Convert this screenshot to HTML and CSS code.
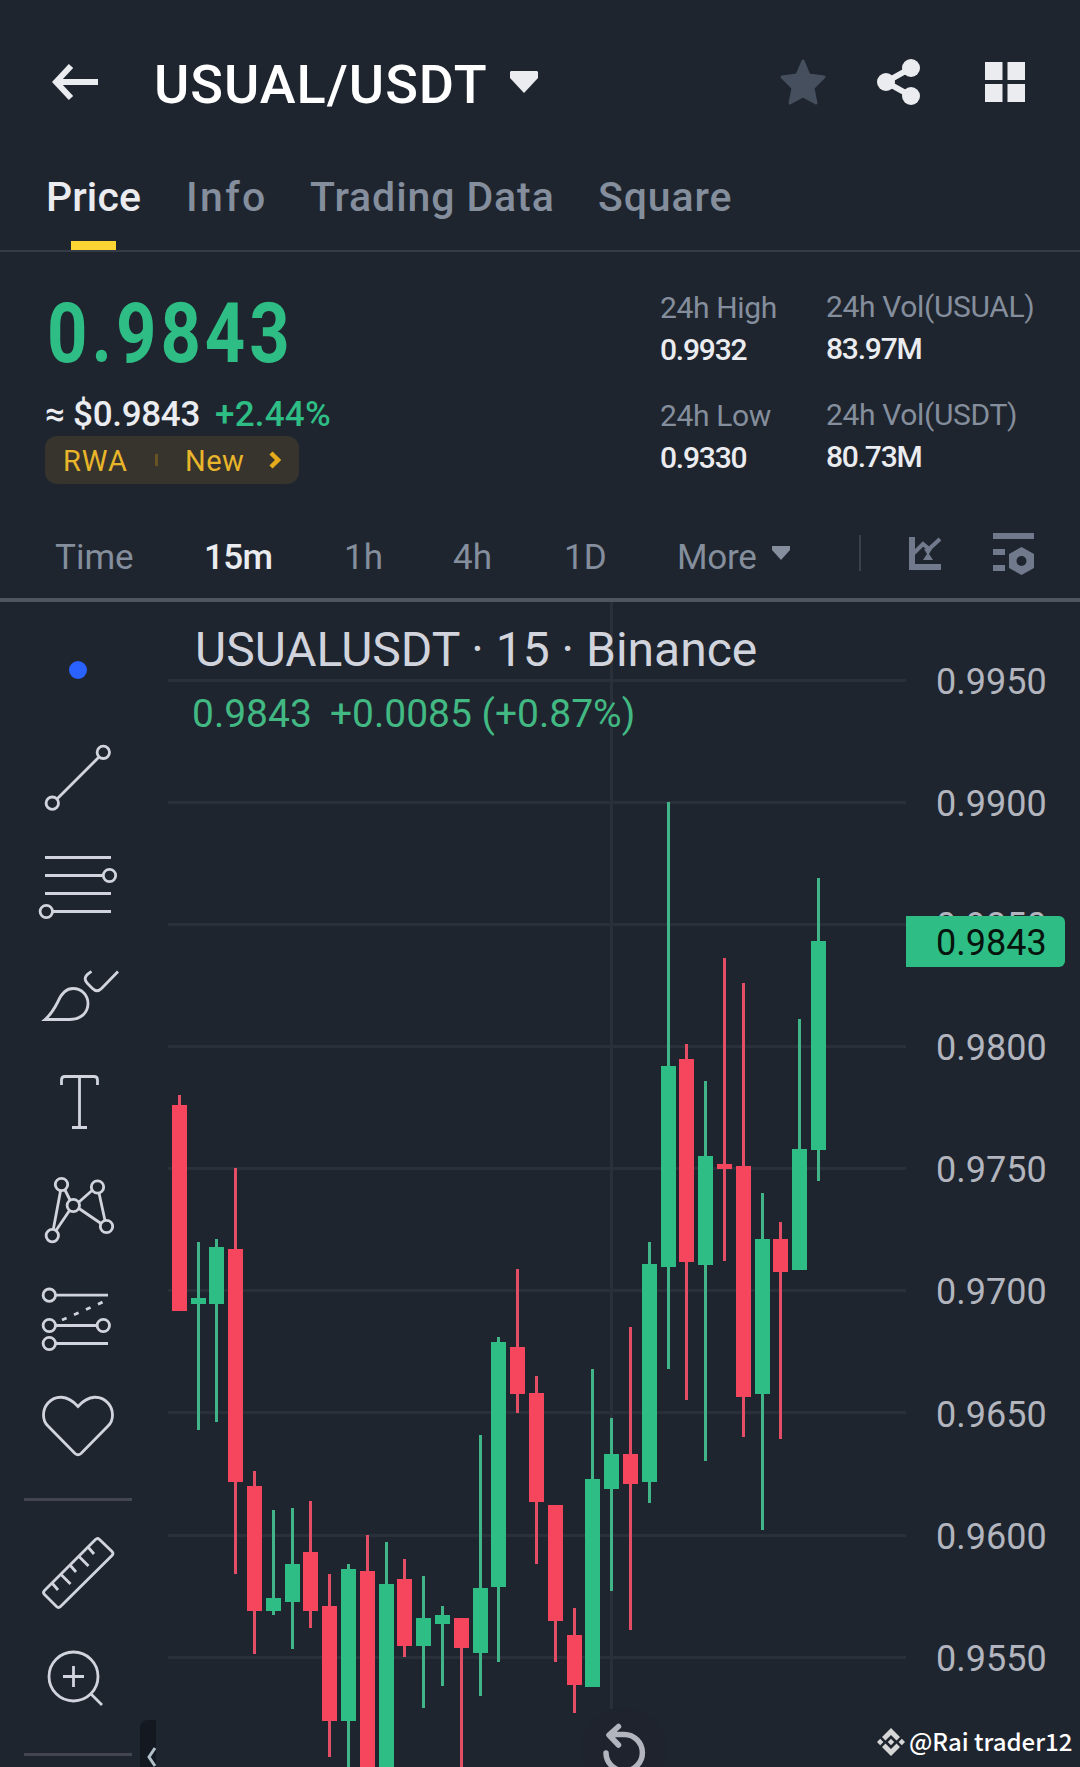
FILE: index.html
```html
<!DOCTYPE html>
<html lang="en">
<head>
    <meta charset="UTF-8">
    <meta name="viewport" content="width=device-width, initial-scale=1.0">
    <title>USUAL/USDT</title>
    <link rel="stylesheet" href="styles.css">
</head>
<body>

    <header class="header">
        <svg class="back" width="46" height="38" viewBox="0 0 46 38">
            <path d="M19 3L4 19l15 16M4 19h42" fill="none" stroke="#eaecef" stroke-width="6"/>
        </svg>
        <h1 class="pair">USUAL/USDT</h1>
        <svg class="pair-caret" width="28" height="22" viewBox="0 0 28 22">
            <path d="M1 0h26l1 1v6L14 22 0 7V1z" fill="#eaecef"/>
        </svg>
        <div class="header-icons">
            <svg width="46" height="46" viewBox="0 0 46 46">
                <path d="M23 2l6 14 15 2-11 11 3 15-13-7-13 7 3-15L2 18l15-2z" fill="#454f5e" stroke="#454f5e" stroke-width="3" stroke-linejoin="round"/>
            </svg>
            <svg width="44" height="46" viewBox="0 0 44 46">
                <path d="M34 9L9 23l25 14" fill="none" stroke="#eaecef" stroke-width="6"/>
                <circle cx="9" cy="23" r="9" fill="#eaecef"/>
                <circle cx="34" cy="9" r="9" fill="#eaecef"/>
                <circle cx="34" cy="37" r="9" fill="#eaecef"/>
            </svg>
            <svg width="40" height="40" viewBox="0 0 40 40">
                <path d="M0 0h17.500v18H0zM22.500 0H40v18H22.500zM0 22h17.500v18H0zM22.500 22H40v18H22.500z" fill="#eaecef"/>
            </svg>
        </div>
    </header>

    <nav class="tabs">
        <div class="tab active">Price</div>
        <div class="tab info">Info</div>
        <div class="tab">Trading Data</div>
        <div class="tab">Square</div>
    </nav>

    <section class="summary">
        <div class="summary-main">
            <div class="last-price">0.9843</div>
            <div class="fiat"><span>≈ $0.9843</span><span class="up">+2.44%</span></div>
            <div class="tags">
                <span class="rwa">RWA</span>
                <i class="tag-sep"></i>
                <span class="new">New</span>
                <svg width="12" height="18" viewBox="0 0 12 18">
                    <path d="M2 2l7 7-7 7" fill="none" stroke="#e5ab1a" stroke-width="4.500"/>
                </svg>
            </div>
        </div>
        <div class="stats high-low">
            <div class="stat"><span class="label">24h High</span><span class="value">0.9932</span></div>
            <div class="stat"><span class="label">24h Low</span><span class="value">0.9330</span></div>
        </div>
        <div class="stats volume">
            <div class="stat"><span class="label">24h Vol(USUAL)</span><span class="value">83.97M</span></div>
            <div class="stat"><span class="label">24h Vol(USDT)</span><span class="value">80.73M</span></div>
        </div>
    </section>

    <div class="intervals">
        <span>Time</span>
        <span class="selected">15m</span>
        <span>1h</span>
        <span>4h</span>
        <span>1D</span>
        <span class="more">More
            <svg width="18" height="14" viewBox="0 0 18 14"><path d="M0 0h18v4L9 14 0 4z" fill="#848e9c"/></svg>
        </span>
        <i class="divider"></i>
        <svg width="33" height="33" viewBox="0 0 33 33">
            <path d="M0 0h6v27h26v6H0z" fill="#717a8c"/>
            <path d="M5 16l9-9 6 5L31 2" fill="none" stroke="#717a8c" stroke-width="4"/>
            <path d="M15 12h8l-3 5 4 6H14l4-6z" fill="#717a8c"/>
        </svg>
        <svg width="42" height="44" viewBox="0 0 42 44">
            <path d="M0 1h41v6H0zM0 17h12v6H0zM0 33h12v6H0z" fill="#717a8c"/>
            <path d="M28.500 15l12.500 7v14l-12.500 7L16 36V22z" fill="#717a8c"/>
            <circle cx="28.500" cy="29" r="5" fill="#1f252f"/>
        </svg>
    </div>

    <main class="chart">
        <aside class="toolbar">
            <svg class="tool" viewBox="0 0 156 108"><circle cx="78" cy="54" r="9" fill="#2962ff" stroke="none"/></svg>
            <!-- trend line -->
            <svg class="tool" viewBox="0 0 156 108">
                <circle cx="52.300" cy="79.200" r="6.200"/><circle cx="103.300" cy="28.300" r="6.200"/>
                <path d="M57 75l42-42"/>
            </svg>
            <!-- fib levels -->
            <svg class="tool" viewBox="0 0 156 108">
                <path d="M45 25.500h66M45 43.500h58M45 61.500h66M53 79.500h58"/>
                <circle cx="109.500" cy="43.500" r="6.200"/><circle cx="46.300" cy="79.500" r="6.200"/>
            </svg>
            <!-- brush -->
            <svg class="tool" viewBox="0 0 156 108">
                <path d="M45 79.500c6-5 10-12 13-18 3-7 8-13 15-13 9 0 15 7 15 15 0 9-7 16-18 16z"/>
                <path d="M91.500 31.500c-7 4-8 8-4 12l5 5c3 3 6 3 9 0l16.500-17"/>
            </svg>
            <!-- text -->
            <svg class="tool" viewBox="0 0 156 108">
                <path d="M61.500 37v-5q0-3.500 3.500-3.500h29q3.500 0 3.500 3.500v5M79.500 28.500v51M72 79.500h15"/>
            </svg>
            <!-- xabcd pattern -->
            <svg class="tool" viewBox="0 0 156 108">
                <circle cx="61.500" cy="28.500" r="6.200"/><circle cx="97.500" cy="31" r="6.200"/>
                <circle cx="73.300" cy="49.500" r="6.200"/><circle cx="52.300" cy="79.600" r="6.200"/><circle cx="106.500" cy="70.500" r="6.200"/>
                <path d="M60.500 35l-7.200 38.500M65 34l5 10M79 46l13-11.500M69.500 54.500L56 74.500M79 52.500l22 15M99 37l6 27.500"/>
            </svg>
            <!-- forecast -->
            <svg class="tool" viewBox="0 0 156 108">
                <circle cx="49.300" cy="31.200" r="6.200"/><circle cx="49.300" cy="61.500" r="6.200"/>
                <circle cx="103.300" cy="61.500" r="6.200"/><circle cx="49.300" cy="79.500" r="6.200"/>
                <path d="M56 31.200h52M56 61.500h41M56 79.500h52"/>
                <path d="M62 56l42-18.500" stroke-dasharray="5 8.100"/>
            </svg>
            <!-- favourites -->
            <svg class="tool" viewBox="0 0 156 108">
                <path d="M78 34.500c-11-12.500-23-11-30-3.500-6 7-6 17 0 23l27 27.500q3 2.500 6 0l27-27.500c6-6 6-16 0-23-7-7.500-19-9-30 3.500z"/>
            </svg>
            <div class="tool-sep"></div>
            <!-- ruler -->
            <svg class="tool" viewBox="0 0 156 108">
                <path d="M95.500 20.500L44.500 71.500q-2 2 0 4l12 12q2 2 4 0l51.500-51q2-2 0-4l-12.500-12q-2-2-4 0z"/>
                <path d="M52 64l6 7M61 55.500l9.500 9.500M70 46l6 7M79 37.500l9.500 9.500M88 28l6 7"/>
            </svg>
            <!-- zoom in -->
            <svg class="tool" viewBox="0 0 156 108">
                <circle cx="73.500" cy="49.500" r="24.500"/>
                <path d="M73.500 39v21M63 49.500h21M91 67l11 11"/>
            </svg>
            <div class="tool-sep"></div>
        </aside>

        <svg class="plot" id="plot" width="750" height="1165" viewBox="156 602 750 1165"></svg>

        <div class="axis">
            <span>0.9950</span>
            <span>0.9900</span>
            <span>0.9850</span>
            <span>0.9800</span>
            <span>0.9750</span>
            <span>0.9700</span>
            <span>0.9650</span>
            <span>0.9600</span>
            <span>0.9550</span>
            <span>0.9500</span>
            <div class="price-tag">0.9843</div>
        </div>

        <div class="legend">
            <div class="legend-title">USUALUSDT · 15 · Binance</div>
            <div class="legend-values"><span>0.9843</span><span>+0.0085 (+0.87%)</span></div>
        </div>

        <div class="collapse">
            <svg width="12" height="24" viewBox="0 0 12 24"><path d="M9 3L3 12l6 9" fill="none" stroke="#b2c0ca" stroke-width="3"/></svg>
        </div>

        <div class="reset">
            <svg width="50" height="56" viewBox="0 0 50 56">
                <path d="M8 30a18.200 18.200 0 1 0 18.200-18.500H12M20.500 3.500L11 12l9.500 10" fill="none" stroke="#b2b5be" stroke-width="5.500" stroke-linecap="round" stroke-linejoin="round"/>
            </svg>
        </div>

        <div class="watermark">
            <svg width="28" height="28" viewBox="0 0 28 28" fill="#d6d6d6">
                <path d="M14 0l9 9-3.500 3.500L14 7l-5.500 5.500L5 9zM14 28l-9-9 3.500-3.500L14 21l5.500-5.500L23 19zM3.200 10.800L6.400 14l-3.200 3.200L0 14zM24.800 10.800L28 14l-3.200 3.200-3.200-3.200zM14 10.800l3.200 3.200-3.200 3.200-3.200-3.200z"/>
            </svg>
            <span>@Rai trader12</span>
        </div>
    </main>

    <script src="chart.js"></script>
</body>
</html>
```
FILE: styles.css
```css
body {
    margin: 0;
    background: #1f252f;
    color: #eaecef;
    font-family: Roboto, "Liberation Sans", sans-serif;
    overflow: hidden;
}

svg {
    display: block;
    flex: none;
}

/* header */
.header {
    display: flex;
    align-items: center;
    height: 164px;
    padding: 0 55px 0 52px;
}

.pair {
    margin: 6px 0 0 56px;
    font-size: 54px;
    font-weight: 500;
    letter-spacing: 1px;
    line-height: 64px;
    color: #fff;
}

.pair-caret {
    margin-left: 22px;
}

.header-icons {
    display: flex;
    align-items: center;
    margin-left: auto;
}

.header-icons svg + svg {
    margin-left: 51px;
}

.header-icons svg:last-child {
    margin-left: 64px;
}

/* tabs */
.tabs {
    display: grid;
    grid-template-columns: 140px 124px 288px 1fr;
    height: 86px;
    padding-left: 46px;
    border-bottom: 2px solid #333b46;
    font-size: 41px;
    font-weight: 500;
    line-height: 67px;
    letter-spacing: 0.9px;
    color: #848e9c;
}

.tab.active {
    color: #eaecef;
    letter-spacing: 0.1px;
}

.tab.info {
    letter-spacing: 2.4px;
}

.tab.active::after {
    content: "";
    display: block;
    width: 45px;
    height: 9px;
    margin: 10px 0 0 25px;
    background: #fcd535;
}

/* price summary */
.summary {
    display: flex;
    height: 262px;
    padding-left: 45px;
    box-sizing: border-box;
}

.summary-main {
    width: 615px;
    padding-top: 42px;
}

/* condensed digits */
.last-price {
    margin-left: 2px;
    font-size: 83px;
    font-weight: 700;
    line-height: 80px;
    letter-spacing: 4.7px;
    color: #2ebd85;
    transform: scaleX(0.85);
    transform-origin: left;
}

.fiat {
    display: flex;
    gap: 15px;
    margin-top: 18px;
    font-size: 35px;
    font-weight: 500;
    line-height: 45px;
    height: 44px;
    letter-spacing: -0.3px;
}

.up {
    color: #2ebd85;
    letter-spacing: 0.2px;
}

.tags {
    display: flex;
    align-items: center;
    width: 254px;
    height: 48px;
    padding-left: 18px;
    box-sizing: border-box;
    border-radius: 12px;
    background: #37342d;
    font-size: 29px;
    color: #e9b52a;
}

.rwa {
    width: 92px;
    padding-top: 1px;
    letter-spacing: 1px;
}

.tag-sep {
    width: 3px;
    height: 12px;
    background: #685423;
}

.new {
    width: 84px;
    margin-left: 27px;
    padding-top: 1px;
    letter-spacing: 0.5px;
}

.stats {
    display: flex;
    flex-direction: column;
    gap: 24px;
}

.high-low {
    width: 166px;
    padding-top: 35px;
}

.volume {
    padding-top: 34px;
}

.stat {
    display: flex;
    flex-direction: column;
    font-size: 30px;
    line-height: 42px;
}

.label {
    color: #848e9c;
    letter-spacing: -0.35px;
    white-space: nowrap;
}

.value {
    font-weight: 500;
    letter-spacing: -1.2px;
}

/* intervals */
.intervals {
    display: grid;
    grid-template-columns: 149px 140px 109px 111px 113px 182px 50px 84px 1fr;
    align-items: center;
    height: 84px;
    padding-left: 55px;
    border-bottom: 4px solid #4d5560;
    font-size: 35px;
    color: #848e9c;
}

.intervals span {
    padding-top: 2px;
}

.selected {
    color: #eaecef;
    font-weight: 500;
    letter-spacing: -0.6px;
}

.more {
    display: flex;
    align-items: center;
    gap: 16px;
    letter-spacing: -0.3px;
}

.more svg {
    margin-bottom: 8px;
}

.divider {
    width: 2px;
    height: 36px;
    margin-bottom: 6px;
    background: #38404b;
}

.intervals > svg {
    margin-bottom: 5px;
}

/* chart */
.chart {
    position: relative;
    display: flex;
    height: 1165px;
    overflow: hidden;
}

.toolbar {
    width: 156px;
    padding-top: 14px;
}

.tool {
    width: 156px;
    height: 108px;
    fill: none;
    stroke: #d1d4dc;
    stroke-width: 2.8;
}

.tool-sep {
    width: 108px;
    height: 3px;
    margin: 18px 24px;
    background: #434651;
}

.plot .grid {
    stroke: #2a303a;
    stroke-width: 3;
}

.plot .up-body {
    fill: #2ebd85;
}

.plot .up-wick {
    fill: #3fb588;
}

.plot .down-body {
    fill: #f6465d;
}

.plot .down-wick {
    fill: #e34e66;
}

.axis {
    position: relative;
    display: flex;
    flex-direction: column;
    width: 174px;
    padding-top: 19px;
    font-size: 36px;
    color: #b2b5be;
}

.axis span {
    flex: none;
    height: 122.1px;
    padding-left: 30px;
    line-height: 122.1px;
}

.price-tag {
    position: absolute;
    left: 0;
    top: 314px;
    width: 159px;
    height: 51px;
    padding-left: 30px;
    box-sizing: border-box;
    line-height: 54px;
    border-radius: 0 6px 6px 0;
    background: #2ebd85;
    color: #07130d;
}

.legend {
    position: absolute;
    left: 195px;
    top: 16px;
}

.legend-title {
    font-size: 48px;
    line-height: 64px;
    color: #d1d4dc;
}

.legend-values {
    display: flex;
    gap: 18px;
    margin-left: -3px;
    font-size: 39px;
    line-height: 64px;
    color: #42b883;
}

.collapse {
    position: absolute;
    left: 140px;
    top: 1118px;
    width: 16px;
    height: 60px;
    padding: 25px 0 0 6px;
    box-sizing: border-box;
    border-radius: 8px 0 0 0;
    background: #131821;
}

.reset {
    position: absolute;
    left: 581px;
    top: 1105px;
    width: 86px;
    height: 86px;
    padding: 16px 0 0 17px;
    box-sizing: border-box;
    border-radius: 50%;
    background: #1e232d;
}

.watermark {
    position: absolute;
    left: 877px;
    top: 1124px;
    display: flex;
    align-items: center;
    gap: 4px;
    font-family: "Noto Sans CJK SC", "Noto Sans", sans-serif;
    font-size: 24px;
    font-weight: 500;
    line-height: 34px;
    color: #fff;
    white-space: nowrap;
}

.watermark span {
    margin-top: -2px;
}
```
FILE: chart.js
```js
// x, high, body top, body bottom, low, direction
const candles = [
    [179.5, 1095, 1105, 1311, 1311, "down"],
    [198.5, 1242, 1298, 1304, 1430, "up"],
    [216.5, 1239, 1247, 1304, 1422, "up"],
    [235.5, 1168, 1249, 1482, 1574, "down"],
    [254.5, 1471, 1486, 1611, 1654, "down"],
    [273.5, 1510, 1598, 1611, 1615, "up"],
    [292.5, 1508, 1564, 1602, 1649, "up"],
    [310.5, 1501, 1552, 1611, 1628, "down"],
    [329.5, 1574, 1606, 1721, 1757, "down"],
    [348.5, 1564, 1569, 1721, 1770, "up"],
    [367.5, 1535, 1571, 1770, 1770, "down"],
    [386.5, 1542, 1584, 1770, 1770, "up"],
    [404.5, 1559, 1579, 1646, 1657, "down"],
    [423.5, 1576, 1618, 1646, 1708, "up"],
    [442.5, 1606, 1615, 1624, 1686, "up"],
    [461.5, 1618, 1618, 1648, 1770, "down"],
    [480.5, 1435, 1588, 1653, 1696, "up"],
    [498.5, 1337, 1342, 1587, 1662, "up"],
    [517.5, 1269, 1347, 1394, 1413, "down"],
    [536.5, 1376, 1393, 1502, 1564, "down"],
    [555.5, 1505, 1505, 1621, 1662, "down"],
    [574.5, 1608, 1635, 1685, 1713, "down"],
    [592.5, 1369, 1479, 1687, 1687, "up"],
    [611.5, 1418, 1454, 1489, 1591, "up"],
    [630.5, 1327, 1454, 1484, 1630, "down"],
    [649.5, 1242, 1264, 1482, 1503, "up"],
    [668.5, 802, 1066, 1267, 1369, "up"],
    [686.5, 1044, 1059, 1262, 1400, "down"],
    [705.5, 1081, 1156, 1265, 1461, "up"],
    [724.5, 958, 1164, 1169, 1261, "down"],
    [743.5, 983, 1166, 1397, 1437, "down"],
    [762.5, 1193, 1239, 1394, 1530, "up"],
    [780.5, 1222, 1239, 1272, 1439, "down"],
    [799.5, 1019, 1149, 1270, 1270, "up"],
    [818.5, 878, 941, 1150, 1181, "up"]
];

const plot = document.getElementById("plot");

function add(tag, attrs) {
    const el = document.createElementNS("http://www.w3.org/2000/svg", tag);
    for (const key in attrs) el.setAttribute(key, attrs[key]);
    plot.appendChild(el);
}

// grid
for (let i = 0; i < 9; i++) {
    const y = Math.floor(680.3 + i * 122.1);
    add("line", { class: "grid", x1: 168, x2: 906, y1: y + 0.5, y2: y + 0.5 });
}
add("line", { class: "grid", x1: 611.5, x2: 611.5, y1: 602, y2: 1712 });

// candles
for (const [x, high, top, bottom, low, dir] of candles) {
    add("rect", { class: dir + "-wick", x: x - 1.5, y: high, width: 3, height: low - high });
    add("rect", { class: dir + "-body", x: x - 7.5, y: top, width: 15, height: bottom - top });
}
```
